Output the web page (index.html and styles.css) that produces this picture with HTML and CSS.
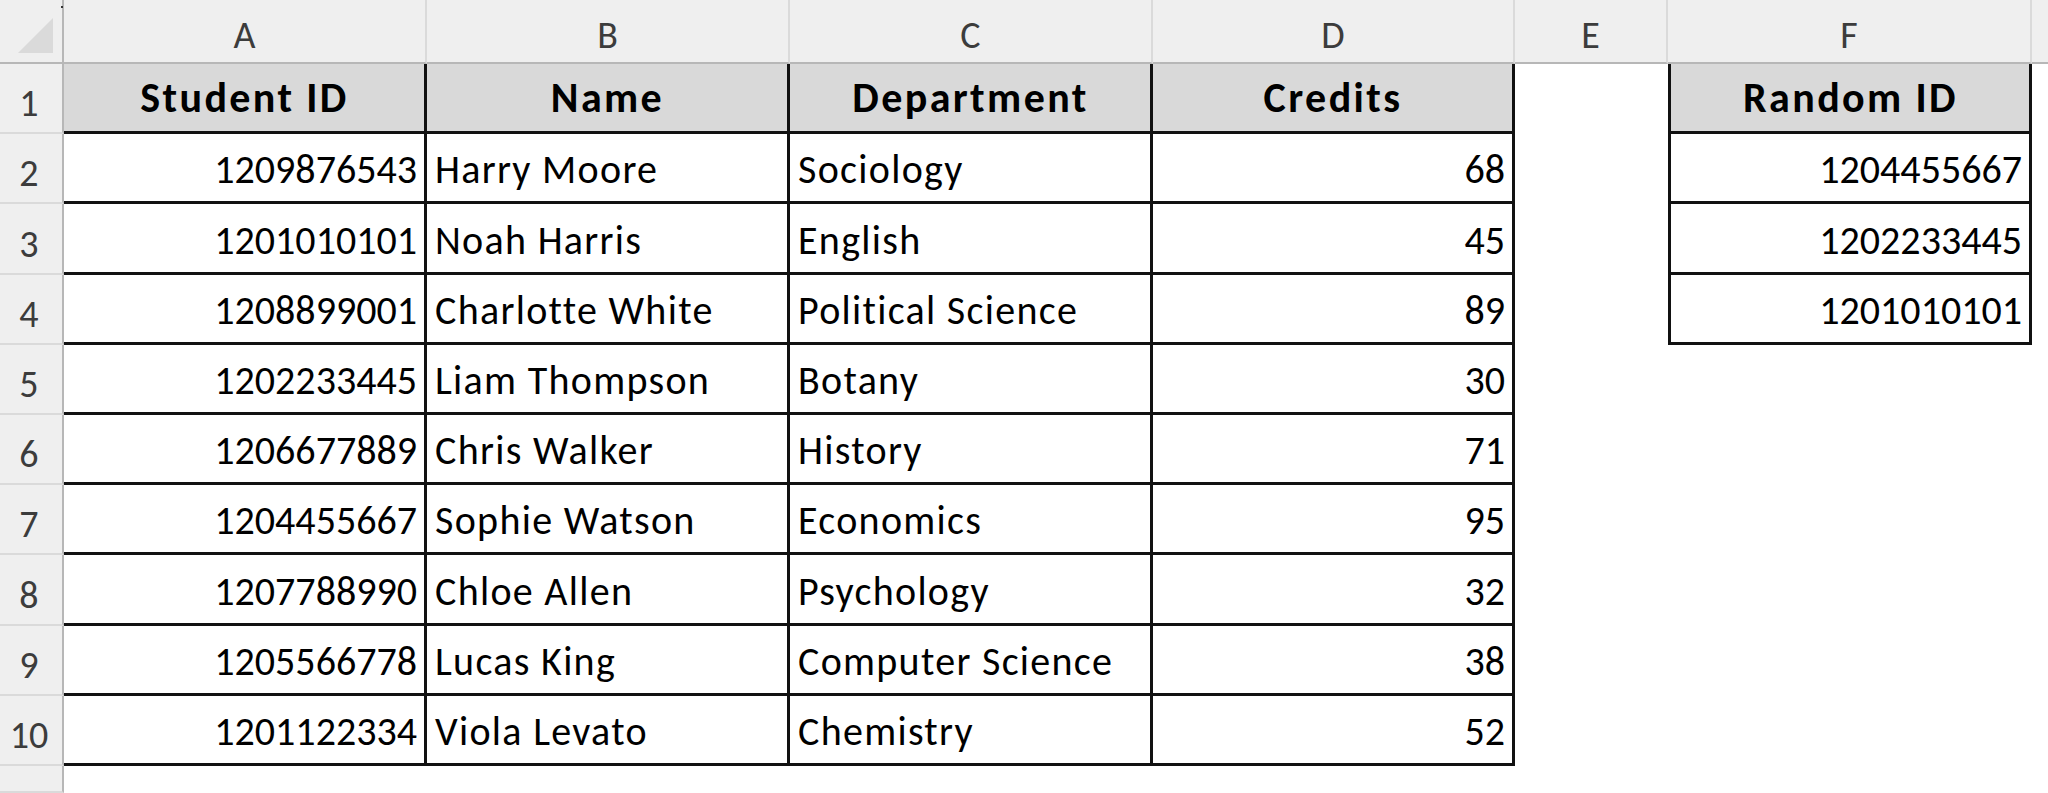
FILE: index.html
```html
<!DOCTYPE html>
<html>
<head>
<meta charset="utf-8">
<link rel="stylesheet" href="styles.css">
</head>
<body>
<div class="sheet">
  <div class="corner"><span class="dot"></span><span class="tri"></span></div>
  <div class="colh">A</div>
  <div class="colh">B</div>
  <div class="colh">C</div>
  <div class="colh">D</div>
  <div class="colh">E</div>
  <div class="colh">F</div>
  <div class="colh last"></div>

  <div class="rowh">1</div>
  <div class="c th first">Student ID</div>
  <div class="c th">Name</div>
  <div class="c th">Department</div>
  <div class="c th">Credits</div>
  <div class="c"></div>
  <div class="c th fl">Random ID</div>
  <div class="c"></div>

  <div class="rowh">2</div>
  <div class="c td num first">1209876543</div>
  <div class="c td">Harry Moore</div>
  <div class="c td">Sociology</div>
  <div class="c td num">68</div>
  <div class="c"></div>
  <div class="c td num fl">1204455667</div>
  <div class="c"></div>

  <div class="rowh">3</div>
  <div class="c td num first">1201010101</div>
  <div class="c td">Noah Harris</div>
  <div class="c td">English</div>
  <div class="c td num">45</div>
  <div class="c"></div>
  <div class="c td num fl">1202233445</div>
  <div class="c"></div>

  <div class="rowh">4</div>
  <div class="c td num first">1208899001</div>
  <div class="c td">Charlotte White</div>
  <div class="c td">Political Science</div>
  <div class="c td num">89</div>
  <div class="c"></div>
  <div class="c td num fl">1201010101</div>
  <div class="c"></div>

  <div class="rowh">5</div>
  <div class="c td num first">1202233445</div>
  <div class="c td">Liam Thompson</div>
  <div class="c td">Botany</div>
  <div class="c td num">30</div>
  <div class="c"></div>
  <div class="c"></div>
  <div class="c"></div>

  <div class="rowh">6</div>
  <div class="c td num first">1206677889</div>
  <div class="c td">Chris Walker</div>
  <div class="c td">History</div>
  <div class="c td num">71</div>
  <div class="c"></div>
  <div class="c"></div>
  <div class="c"></div>

  <div class="rowh">7</div>
  <div class="c td num first">1204455667</div>
  <div class="c td">Sophie Watson</div>
  <div class="c td">Economics</div>
  <div class="c td num">95</div>
  <div class="c"></div>
  <div class="c"></div>
  <div class="c"></div>

  <div class="rowh">8</div>
  <div class="c td num first">1207788990</div>
  <div class="c td">Chloe Allen</div>
  <div class="c td">Psychology</div>
  <div class="c td num">32</div>
  <div class="c"></div>
  <div class="c"></div>
  <div class="c"></div>

  <div class="rowh">9</div>
  <div class="c td num first">1205566778</div>
  <div class="c td">Lucas King</div>
  <div class="c td">Computer Science</div>
  <div class="c td num">38</div>
  <div class="c"></div>
  <div class="c"></div>
  <div class="c"></div>

  <div class="rowh">10</div>
  <div class="c td num first">1201122334</div>
  <div class="c td">Viola Levato</div>
  <div class="c td">Chemistry</div>
  <div class="c td num">52</div>
  <div class="c"></div>
  <div class="c"></div>
  <div class="c"></div>

  <div class="rowh"></div>
  <div class="c"></div>
  <div class="c"></div>
  <div class="c"></div>
  <div class="c"></div>
  <div class="c"></div>
  <div class="c"></div>
  <div class="c"></div>
</div>
</body>
</html>
```
FILE: styles.css
```css
html, body {
  margin: 0;
  padding: 0;
  background: #ffffff;
  overflow: hidden;
}

.sheet {
  display: grid;
  grid-template-columns: 64px 363px 363px 363px 362px 153px 364px 1fr;
  grid-template-rows: 64px repeat(10, 70.2px) 1fr;
  width: 2048px;
  height: 793px;
  font-family: Carlito, Lato, "Open Sans", sans-serif;
  color: #000;
}

.corner {
  position: relative;
  background: #efefef;
  border-right: 2px solid #b7b7b7;
  border-bottom: 2px solid #b7b7b7;
  box-sizing: border-box;
}

.corner .tri {
  position: absolute;
  left: 18px;
  top: 18px;
  width: 0;
  height: 0;
  border-style: solid;
  border-width: 0 0 35px 35px;
  border-color: transparent transparent #dadada transparent;
}

.corner .dot {
  position: absolute;
  left: 61px;
  top: 6px;
  width: 2px;
  height: 2px;
  background: #333;
}

.colh {
  background: #efefef;
  border-right: 2px solid #dadada;
  border-bottom: 2px solid #b7b7b7;
  box-sizing: border-box;
  display: flex;
  align-items: flex-end;
  justify-content: center;
  font-size: 38px;
  line-height: 1;
  padding-bottom: 8px;
  color: #3c3c3c;
}

.colh.last {
  border-right: none;
}

.rowh {
  background: #efefef;
  border-right: 2px solid #b7b7b7;
  border-bottom: 2px solid #dadada;
  box-sizing: border-box;
  display: flex;
  align-items: flex-end;
  justify-content: center;
  font-size: 38px;
  line-height: 1;
  padding-bottom: 10px;
  padding-right: 4px;
  color: #3c3c3c;
}

.c {
  box-sizing: border-box;
  display: flex;
  align-items: flex-end;
  font-size: 40px;
  line-height: 1;
  padding: 0 7px 11px 8px;
  white-space: nowrap;
}

.th,
.td {
  border-right: 3px solid #111;
  border-bottom: 3px solid #111;
}

.td {
  letter-spacing: 1.3px;
}

.th {
  background: #d9d9d9;
  font-size: 42px;
  font-weight: 900;
  letter-spacing: 2.4px;
  justify-content: center;
  padding-bottom: 12px;
}

.num {
  justify-content: flex-end;
  letter-spacing: 0;
}

.fl {
  border-left: 3px solid #111;
}
```
